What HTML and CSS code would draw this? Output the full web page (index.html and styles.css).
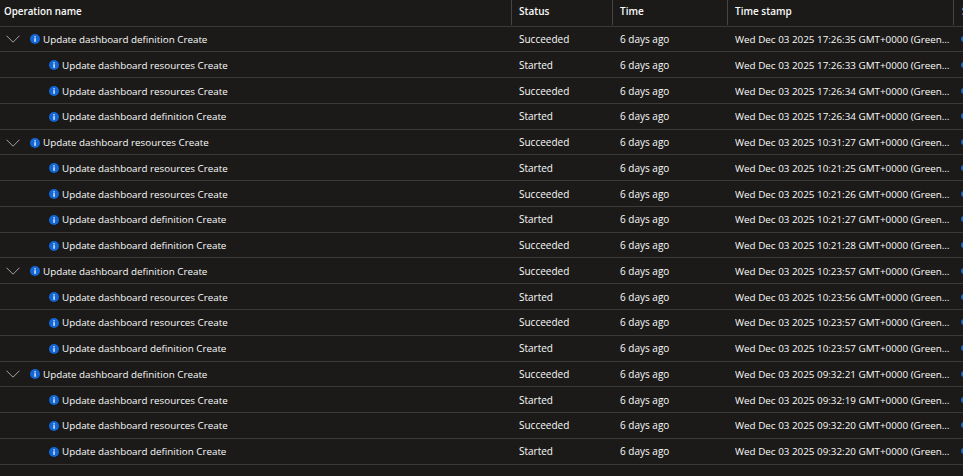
FILE: index.html
```html
<!DOCTYPE html>
<html lang="en">
<head>
<meta charset="utf-8">
<title>Operations</title>
<link rel="stylesheet" href="styles.css">
</head>
<body>
<svg class="defs" width="0" height="0" aria-hidden="true"><symbol id="info" viewBox="0 0 10 10"><circle cx="5" cy="5" r="5" fill="#1266d6"/><rect x="4.4" y="4.2" width="1.3" height="3.6" fill="#fff"/><rect x="4.4" y="2.2" width="1.3" height="1.3" fill="#fff"/></symbol><symbol id="chev" viewBox="0 0 14 8"><path d="M.5.7 7 7.2 13.5.7" fill="none" stroke="#a3a3a3" stroke-width="1"/></symbol></svg>
<div class="grid">
<div class="row head"><div class="cell c1">Operation name</div><div class="cell c2 sep">Status</div><div class="cell c3 sep">Time</div><div class="cell c4 sep">Time stamp</div><div class="cell c5 sep">S</div></div>

<div class="row"><div class="cell c1 parent"><svg class="chev"><use href="#chev"/></svg><svg class="info"><use href="#info"/></svg><span>Update dashboard definition Create</span></div><div class="cell c2">Succeeded</div><div class="cell c3">6 days ago</div><div class="cell c4"><span class="clip">Wed Dec 03 2025 17:26:35 GMT+0000 (Greenwich Mean Time)</span></div><div class="cell c5"><i class="tick"></i></div></div>
<div class="row"><div class="cell c1 child"><svg class="info"><use href="#info"/></svg><span>Update dashboard resources Create</span></div><div class="cell c2">Started</div><div class="cell c3">6 days ago</div><div class="cell c4"><span class="clip">Wed Dec 03 2025 17:26:33 GMT+0000 (Greenwich Mean Time)</span></div><div class="cell c5"><i class="tick"></i></div></div>
<div class="row"><div class="cell c1 child"><svg class="info"><use href="#info"/></svg><span>Update dashboard resources Create</span></div><div class="cell c2">Succeeded</div><div class="cell c3">6 days ago</div><div class="cell c4"><span class="clip">Wed Dec 03 2025 17:26:34 GMT+0000 (Greenwich Mean Time)</span></div><div class="cell c5"><i class="tick"></i></div></div>
<div class="row"><div class="cell c1 child"><svg class="info"><use href="#info"/></svg><span>Update dashboard definition Create</span></div><div class="cell c2">Started</div><div class="cell c3">6 days ago</div><div class="cell c4"><span class="clip">Wed Dec 03 2025 17:26:34 GMT+0000 (Greenwich Mean Time)</span></div><div class="cell c5"><i class="tick"></i></div></div>

<div class="row"><div class="cell c1 parent"><svg class="chev"><use href="#chev"/></svg><svg class="info"><use href="#info"/></svg><span>Update dashboard resources Create</span></div><div class="cell c2">Succeeded</div><div class="cell c3">6 days ago</div><div class="cell c4"><span class="clip">Wed Dec 03 2025 10:31:27 GMT+0000 (Greenwich Mean Time)</span></div><div class="cell c5"><i class="tick"></i></div></div>
<div class="row"><div class="cell c1 child"><svg class="info"><use href="#info"/></svg><span>Update dashboard resources Create</span></div><div class="cell c2">Started</div><div class="cell c3">6 days ago</div><div class="cell c4"><span class="clip">Wed Dec 03 2025 10:21:25 GMT+0000 (Greenwich Mean Time)</span></div><div class="cell c5"><i class="tick"></i></div></div>
<div class="row"><div class="cell c1 child"><svg class="info"><use href="#info"/></svg><span>Update dashboard resources Create</span></div><div class="cell c2">Succeeded</div><div class="cell c3">6 days ago</div><div class="cell c4"><span class="clip">Wed Dec 03 2025 10:21:26 GMT+0000 (Greenwich Mean Time)</span></div><div class="cell c5"><i class="tick"></i></div></div>
<div class="row"><div class="cell c1 child"><svg class="info"><use href="#info"/></svg><span>Update dashboard definition Create</span></div><div class="cell c2">Started</div><div class="cell c3">6 days ago</div><div class="cell c4"><span class="clip">Wed Dec 03 2025 10:21:27 GMT+0000 (Greenwich Mean Time)</span></div><div class="cell c5"><i class="tick"></i></div></div>
<div class="row"><div class="cell c1 child"><svg class="info"><use href="#info"/></svg><span>Update dashboard definition Create</span></div><div class="cell c2">Succeeded</div><div class="cell c3">6 days ago</div><div class="cell c4"><span class="clip">Wed Dec 03 2025 10:21:28 GMT+0000 (Greenwich Mean Time)</span></div><div class="cell c5"><i class="tick"></i></div></div>

<div class="row"><div class="cell c1 parent"><svg class="chev"><use href="#chev"/></svg><svg class="info"><use href="#info"/></svg><span>Update dashboard definition Create</span></div><div class="cell c2">Succeeded</div><div class="cell c3">6 days ago</div><div class="cell c4"><span class="clip">Wed Dec 03 2025 10:23:57 GMT+0000 (Greenwich Mean Time)</span></div><div class="cell c5"><i class="tick"></i></div></div>
<div class="row"><div class="cell c1 child"><svg class="info"><use href="#info"/></svg><span>Update dashboard resources Create</span></div><div class="cell c2">Started</div><div class="cell c3">6 days ago</div><div class="cell c4"><span class="clip">Wed Dec 03 2025 10:23:56 GMT+0000 (Greenwich Mean Time)</span></div><div class="cell c5"><i class="tick"></i></div></div>
<div class="row"><div class="cell c1 child"><svg class="info"><use href="#info"/></svg><span>Update dashboard resources Create</span></div><div class="cell c2">Succeeded</div><div class="cell c3">6 days ago</div><div class="cell c4"><span class="clip">Wed Dec 03 2025 10:23:57 GMT+0000 (Greenwich Mean Time)</span></div><div class="cell c5"><i class="tick"></i></div></div>
<div class="row"><div class="cell c1 child"><svg class="info"><use href="#info"/></svg><span>Update dashboard definition Create</span></div><div class="cell c2">Started</div><div class="cell c3">6 days ago</div><div class="cell c4"><span class="clip">Wed Dec 03 2025 10:23:57 GMT+0000 (Greenwich Mean Time)</span></div><div class="cell c5"><i class="tick"></i></div></div>

<div class="row"><div class="cell c1 parent"><svg class="chev"><use href="#chev"/></svg><svg class="info"><use href="#info"/></svg><span>Update dashboard definition Create</span></div><div class="cell c2">Succeeded</div><div class="cell c3">6 days ago</div><div class="cell c4"><span class="clip">Wed Dec 03 2025 09:32:21 GMT+0000 (Greenwich Mean Time)</span></div><div class="cell c5"><i class="tick"></i></div></div>
<div class="row"><div class="cell c1 child"><svg class="info"><use href="#info"/></svg><span>Update dashboard resources Create</span></div><div class="cell c2">Started</div><div class="cell c3">6 days ago</div><div class="cell c4"><span class="clip">Wed Dec 03 2025 09:32:19 GMT+0000 (Greenwich Mean Time)</span></div><div class="cell c5"><i class="tick"></i></div></div>
<div class="row"><div class="cell c1 child"><svg class="info"><use href="#info"/></svg><span>Update dashboard resources Create</span></div><div class="cell c2">Succeeded</div><div class="cell c3">6 days ago</div><div class="cell c4"><span class="clip">Wed Dec 03 2025 09:32:20 GMT+0000 (Greenwich Mean Time)</span></div><div class="cell c5"><i class="tick"></i></div></div>
<div class="row"><div class="cell c1 child"><svg class="info"><use href="#info"/></svg><span>Update dashboard definition Create</span></div><div class="cell c2">Started</div><div class="cell c3">6 days ago</div><div class="cell c4"><span class="clip">Wed Dec 03 2025 09:32:20 GMT+0000 (Greenwich Mean Time)</span></div><div class="cell c5"><i class="tick"></i></div></div>
</div>
</body>
</html>
```
FILE: styles.css
```css
html, body {
  margin: 0;
  height: 100%;
  overflow: hidden;
  background: #1b1a19;
}
.defs { position: absolute; }
.grid {
  width: 963px;
  font-family: "Open Sans", "Noto Sans", sans-serif;
  font-size: 10px;
  color: #fafafa;
}
.row {
  display: grid;
  grid-template-columns: 511px 101px 115px 226px 10px;
  height: 25.77px;
  box-sizing: border-box;
  border-bottom: 1px solid #3b3a39;
  align-items: center;
}
.head {
  height: 26.6px;
  font-weight: 600;
  border-bottom-width: 1px;
  align-items: stretch;
}
.cell {
  display: flex;
  align-items: center;
  min-width: 0;
  white-space: nowrap;
  padding-left: 8px;
}
.c1 { font-size: 9.8px; }
.head .c1 { padding-left: 4px; }
.head .cell { padding-bottom: 2px; }
.sep { border-left: 1px solid #484644; margin-bottom: 1px; padding-left: 7px; }
.c5 { overflow: hidden; padding-left: 8px; }
.parent { padding-left: 6px; padding-top: 1px; }
.child { padding-left: 49px; padding-top: 1px; }
.chev { width: 14px; height: 8px; margin-right: 10px; }
.info { width: 10px; height: 10px; margin-right: 3px; flex: none; }
.clip {
  display: block;
  width: 218px;
  font-size: 9.85px;
  overflow: hidden;
  text-overflow: ellipsis;
}
.tick {
  display: block;
  width: 6px;
  height: 6px;
  border-radius: 50%;
  background: #1266d6;
  flex: none;
}
```
